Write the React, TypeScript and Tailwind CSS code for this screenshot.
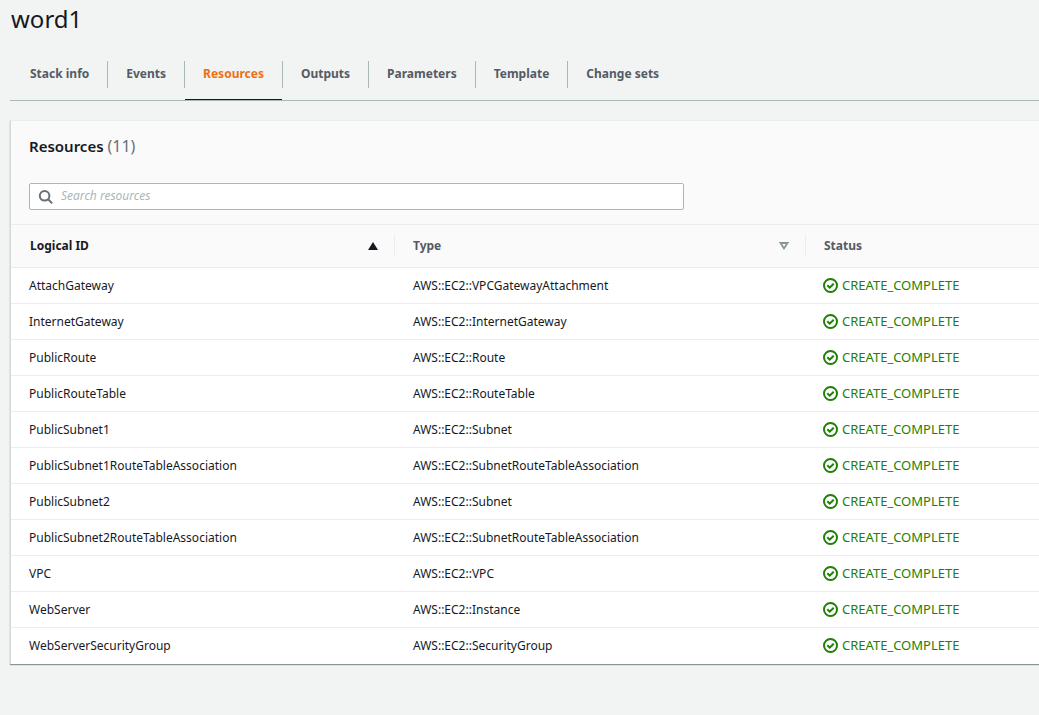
interface Resource {
  logicalId: string;
  type: string;
}

const tabs = ['Stack info', 'Events', 'Resources', 'Outputs', 'Parameters', 'Template', 'Change sets'];

const resources: Resource[] = [
  { logicalId: 'AttachGateway', type: 'AWS::EC2::VPCGatewayAttachment' },
  { logicalId: 'InternetGateway', type: 'AWS::EC2::InternetGateway' },
  { logicalId: 'PublicRoute', type: 'AWS::EC2::Route' },
  { logicalId: 'PublicRouteTable', type: 'AWS::EC2::RouteTable' },
  { logicalId: 'PublicSubnet1', type: 'AWS::EC2::Subnet' },
  { logicalId: 'PublicSubnet1RouteTableAssociation', type: 'AWS::EC2::SubnetRouteTableAssociation' },
  { logicalId: 'PublicSubnet2', type: 'AWS::EC2::Subnet' },
  { logicalId: 'PublicSubnet2RouteTableAssociation', type: 'AWS::EC2::SubnetRouteTableAssociation' },
  { logicalId: 'VPC', type: 'AWS::EC2::VPC' },
  { logicalId: 'WebServer', type: 'AWS::EC2::Instance' },
  { logicalId: 'WebServerSecurityGroup', type: 'AWS::EC2::SecurityGroup' },
];

function SearchIcon() {
  return (
    <svg className="h-4 w-4 shrink-0" viewBox="0 0 16 16" fill="none" stroke="#687078" strokeWidth="2" aria-hidden="true">
      <circle cx="6.6" cy="6.8" r="4.8" />
      <path d="M10.1 10.3 14.2 14.4" />
    </svg>
  );
}

function SuccessIcon() {
  return (
    <svg className="h-4 w-4 shrink-0" viewBox="0 0 16 16" fill="none" stroke="#1d8102" strokeWidth="2" aria-hidden="true">
      <circle cx="8.5" cy="8.5" r="6.5" />
      <path d="M5.3 8.3 7.7 10.7 11.7 6.7" />
    </svg>
  );
}

function SortAscIcon() {
  return (
    <svg className="h-2 w-[10px]" viewBox="0 0 10 8" fill="#16191f" aria-hidden="true">
      <path d="M5 0 10 8H0Z" />
    </svg>
  );
}

function SortIcon() {
  return (
    <svg className="h-2 w-[10px]" viewBox="0 0 10 8" fill="none" stroke="#879596" strokeWidth="1.8" aria-hidden="true">
      <path d="M1.5 1H8.5L5 6.4Z" />
    </svg>
  );
}

function Tabs() {
  return (
    <nav className="mt-[25px] flex border-b border-[#aab7b8] pl-0.5">
      {tabs.map((tab, idx) => {
        const active = tab === 'Resources';
        return (
          <div key={tab} className="flex h-[39px]">
            <a
              href="#"
              aria-current={active ? 'page' : undefined}
              className={`flex px-[18px] pt-[3px] text-xs leading-5 font-bold whitespace-nowrap ${
                active ? 'border-b border-[#16191f] text-[#ec7211]' : 'text-[#545b64]'
              }`}
            >
              {tab}
            </a>
            {idx < tabs.length - 1 && <span className="h-[27px] w-px bg-[#aab7b8]" />}
          </div>
        );
      })}
    </nav>
  );
}

function ResourcesTable() {
  return (
    <table className="w-full table-fixed border-collapse text-left text-xs leading-5">
      <colgroup>
        <col className="w-[384px]" />
        <col className="w-[411px]" />
        <col />
      </colgroup>
      <thead className="bg-[#fafafa]">
        <tr className="h-[43px] border-y border-[#eaeded]">
          <th className="p-0 text-[#16191f]" aria-sort="ascending">
            <button type="button" className="flex h-[22px] w-full items-center justify-between border-r border-[#eaeded] pr-4 pl-[19px]">
              Logical ID
              <SortAscIcon />
            </button>
          </th>
          <th className="p-0 text-[#545b64]">
            <button type="button" className="flex h-[22px] w-full items-center justify-between border-r border-[#eaeded] pr-4 pl-[18px]">
              Type
              <SortIcon />
            </button>
          </th>
          <th className="py-0 pr-4 pl-[18px] text-[#545b64]">Status</th>
        </tr>
      </thead>
      <tbody>
        {resources.map((resource) => (
          <tr key={resource.logicalId} className="h-9 border-b border-[#eaeded] last:border-b-0">
            <td className="pt-px pb-0 pl-[18px]">{resource.logicalId}</td>
            <td className="pt-px pb-0 pl-[18px]">{resource.type}</td>
            <td className="pt-0 pb-px pl-4">
              <span className="flex items-center gap-1 text-[13px] text-[#1d8102]">
                <SuccessIcon />
                CREATE_COMPLETE
              </span>
            </td>
          </tr>
        ))}
      </tbody>
    </table>
  );
}

export default function App() {
  return (
    <div className="min-h-screen overflow-hidden bg-[#f2f3f3] pl-[10px] font-['Noto_Sans','Open_Sans',sans-serif] text-[#16191f]">
      <h1 className="pt-[3px] pb-px pl-px text-2xl leading-8">word1</h1>
      <Tabs />

      <section className="mt-[19px] border-t border-l border-t-[#eaeded] border-l-[#d5dbdb] bg-white shadow-[0_1px_1px_0_#879596]">
        <div className="bg-[#fafafa] px-[18px] pt-[13px] pb-[14px]">
          <h2 className="text-[15px] leading-6 font-semibold">
            Resources <span className="text-base leading-6 font-normal text-[#687078]">(11)</span>
          </h2>
          <label className="mt-[25px] flex h-[27px] w-[655px] max-w-full items-center gap-[7px] rounded-xs border border-[#aab7b8] bg-white px-2">
            <SearchIcon />
            <input
              type="search"
              aria-label="Search resources"
              placeholder="Search resources"
              className="mb-px min-w-0 flex-1 bg-transparent text-xs leading-5 outline-none placeholder:text-[#aab7b8] placeholder:italic"
            />
          </label>
        </div>
        <ResourcesTable />
      </section>
    </div>
  );
}
